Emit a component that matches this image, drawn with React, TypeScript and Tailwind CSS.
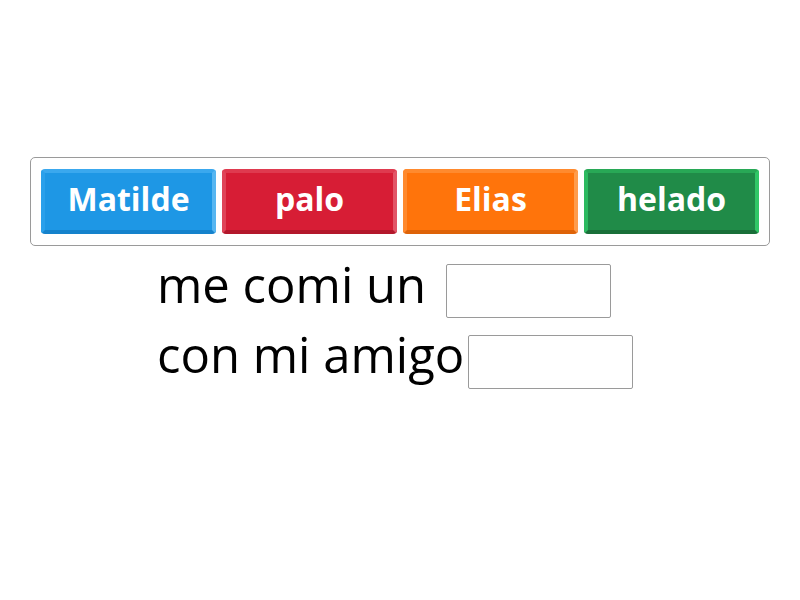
const words = [
  { label: 'Matilde', tone: 'bg-[#1e97e5] border-t-[#3aa8ee] border-l-[#2aa0eb] border-r-[#56b6f1] border-b-[#1582cc]' },
  { label: 'palo', tone: 'bg-[#d71d35] border-t-[#df3a4f] border-l-[#df4458] border-r-[#e25567] border-b-[#b3172b]' },
  { label: 'Elias', tone: 'bg-[#ff740b] border-t-[#ff8a2e] border-l-[#ff8a2e] border-r-[#ff9c4c] border-b-[#de6308]' },
  { label: 'helado', tone: 'bg-[#208b48] border-t-[#28a856] border-l-[#2cba60] border-r-[#31c767] border-b-[#196f39]' },
]

function Blank({ className }: { className: string }) {
  return <div className={`h-[54px] w-[165px] shrink-0 rounded-[2px] border border-[#9a9a9a] bg-white ${className}`} />
}

export default function App() {
  return (
    <div className="h-[600px] w-[800px] bg-white pt-[157px] font-['Open_Sans',sans-serif]">
      <div className="mx-[30px] grid h-[89px] grid-cols-4 items-center gap-[6px] rounded-[5px] border border-[#9a9a9a] px-[10px]">
        {words.map((w) => (
          <div
            key={w.label}
            className={`flex h-[65px] items-center justify-center rounded-[4px] border-[4px] pb-[5px] text-[32px] font-bold text-white ${w.tone}`}
          >
            {w.label}
          </div>
        ))}
      </div>

      <div className="mt-[11px] pl-[157px] text-[49px] leading-[54px] text-black">
        <div className="flex h-[70px] items-start">
          <span>me comi un</span>
          <Blank className="ml-[20px] mt-[7px]" />
        </div>
        <div className="flex h-[70px] items-start">
          <span>con mi amigo</span>
          <Blank className="ml-[4px] mt-[8px]" />
        </div>
      </div>
    </div>
  )
}
